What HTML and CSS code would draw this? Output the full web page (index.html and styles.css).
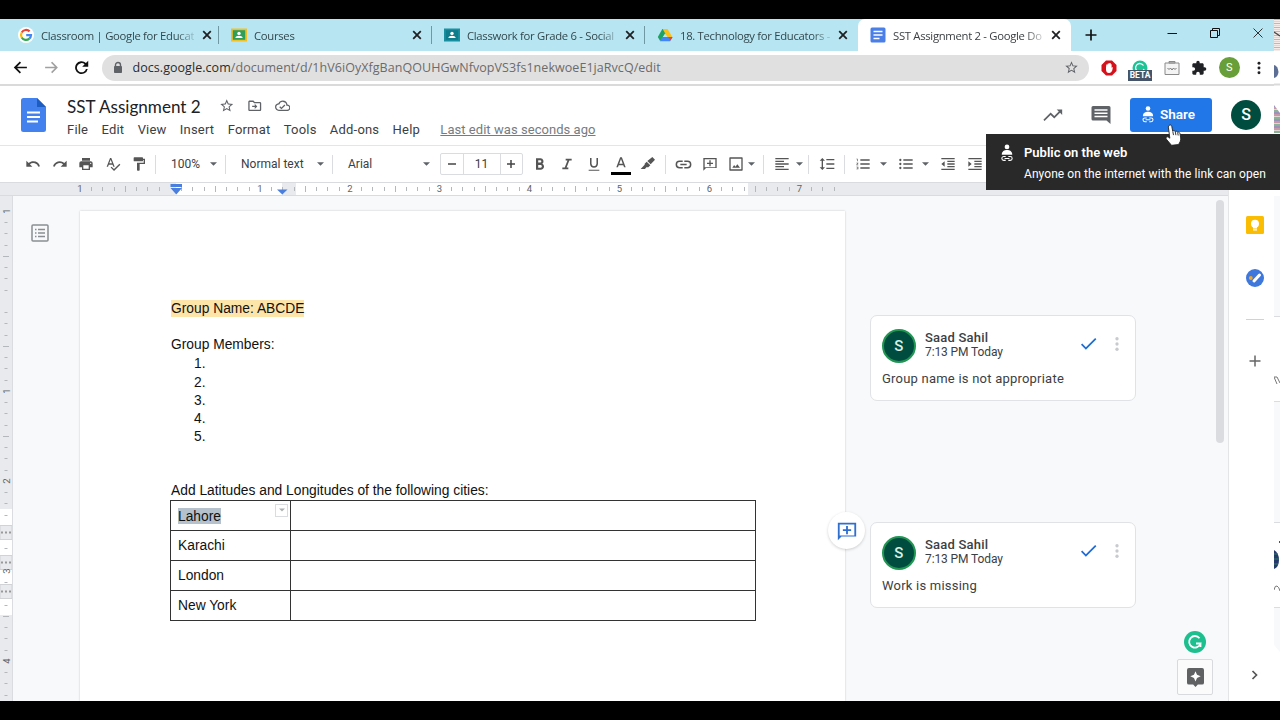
FILE: index.html
```html
<!DOCTYPE html>
<html lang="en">
<head>
  <meta charset="UTF-8">
  <meta name="viewport" content="width=device-width, initial-scale=1.0">
  <title>SST Assignment 2 - Google Docs</title>
  <link rel="stylesheet" href="styles.css">
</head>
<body>
  <!-- Shared icons -->
  <svg class="defs" width="0" height="0">
    <symbol id="i-close" viewBox="0 0 10 10"><path d="M1.2 1.2l7.6 7.6M8.8 1.2L1.2 8.8" stroke="#202124" stroke-width="1.8"/></symbol>
    <symbol id="i-caret" viewBox="0 0 8 4"><path d="M0 0h8L4 4z" fill="#5f6368"/></symbol>
    <symbol id="i-star" viewBox="0 0 24 24"><path d="M22 9.24l-7.19-.62L12 2 9.19 8.63 2 9.24l5.46 4.73L5.82 21 12 17.27 18.18 21l-1.63-7.03L22 9.24zM12 15.4l-3.76 2.27 1-4.28-3.32-2.88 4.38-.38L12 6.1l1.71 4.04 4.38.38-3.32 2.88 1 4.28L12 15.4z"/></symbol>
    <symbol id="i-dots" viewBox="0 0 24 24"><circle cx="12" cy="5" r="2.2"/><circle cx="12" cy="12" r="2.2"/><circle cx="12" cy="19" r="2.2"/></symbol>
    <symbol id="i-check" viewBox="0 0 24 24"><path d="M9 16.17L4.83 12l-1.42 1.41L9 19 21 7l-1.41-1.41z"/></symbol>
    <symbol id="i-addcomment" viewBox="0 0 24 24"><path d="M2 3h20v15H6l-4 4zm2 2v12h16V5zm7 1.5h2V10h3.500v2H13v3.500h-2V12H7.500v-2H11z" fill-rule="evenodd"/></symbol>
    <symbol id="i-public" viewBox="0 0 16 20"><circle cx="8" cy="3" r="2.7"/><path d="M2 12c0-4 3-5.300 6-5.300s6 1.300 6 5.300z"/><path d="M6.500 14H4.300a2.200 2.200 0 0 0 0 4.400h2.200M9.500 14h2.200a2.200 2.200 0 0 1 0 4.400H9.500M5.200 16.200h5.600" fill="none" stroke="currentColor" stroke-width="1.2"/></symbol>
  </svg>

  <div class="screen">
    <div class="window">

      <!-- Tab strip -->
      <div class="tabs">
        <div class="tab">
          <svg class="favicon" viewBox="0 0 16 16"><circle cx="8" cy="8" r="8" fill="#fff"/><g fill="none" stroke-width="2.2"><path d="M11.600 4.400A5 5 0 0 0 3.700 5.500" stroke="#ea4335"/><path d="M3.700 5.500a5 5 0 0 0 0 5" stroke="#fbbc05"/><path d="M3.700 10.500a5 5 0 0 0 7.600 1.200" stroke="#34a853"/><path d="M11.300 11.700A5 5 0 0 0 13 8.200H8.200" stroke="#4285f4"/></g></svg>
          <span class="tab-title">Classroom | Google for Educat</span>
          <svg class="tab-close"><use href="#i-close"/></svg>
        </div>
        <div class="tab">
          <svg class="favicon" viewBox="0 0 16 16"><path fill="#f2bf26" d="M0 1.500h16v13H0z"/><path fill="#2f9e5b" d="M1.800 3.200h12.400v9.600H1.800z"/><circle cx="8" cy="6.400" r="1.7" fill="#fff"/><path fill="#fff" d="M4.300 11c.3-3 7.100-3 7.400 0z"/></svg>
          <span class="tab-title">Courses</span>
          <svg class="tab-close"><use href="#i-close"/></svg>
        </div>
        <div class="tab">
          <svg class="favicon" viewBox="0 0 16 16"><path fill="#1a8f9f" d="M0 1.500h16v13H0z"/><path fill="#0f7c8c" d="M1.800 3.200h12.400v9.600H1.800z"/><circle cx="8" cy="6.400" r="1.7" fill="#fff"/><path fill="#fff" d="M4.300 11c.3-3 7.100-3 7.400 0z"/></svg>
          <span class="tab-title">Classwork for Grade 6 - Social</span>
          <svg class="tab-close"><use href="#i-close"/></svg>
        </div>
        <div class="tab">
          <svg class="favicon" viewBox="0 0 16 16"><path fill="#1ea362" d="M5.300 2h2.900L10 5 3.200 14 .8 10z"/><path fill="#fbc116" d="M5.600 2h4.900l5 8.200h-5z"/><path fill="#4285f4" d="M5.300 10h10.200l-2.400 4.200H2.900z"/><path fill="#e94335" d="M11.500 10h4l-2 3.500z"/><path fill="#b7e6f2" d="M8 6.400l2.200 3.600H5.800z"/></svg>
          <span class="tab-title">18. Technology for Educators -</span>
          <svg class="tab-close"><use href="#i-close"/></svg>
        </div>
        <div class="tab active">
          <svg class="favicon" viewBox="0 0 16 16"><rect x=".5" y=".5" width="15" height="15" rx="1.5" fill="#4a7fe8"/><path d="M3.500 4.500h9M3.500 8h9M3.500 11.500h6" stroke="#fff" stroke-width="1.6"/></svg>
          <span class="tab-title">SST Assignment 2 - Google Do</span>
          <svg class="tab-close"><use href="#i-close"/></svg>
        </div>
        <svg class="new-tab" viewBox="0 0 12 12"><path d="M6 .5v11M.5 6h11" stroke="#111" stroke-width="1.7"/></svg>
        <div class="window-buttons">
          <svg viewBox="0 0 12 12"><path d="M1.500 6.500h9.500" stroke="#111"/></svg>
          <svg viewBox="0 0 12 12"><path d="M1.500 3.500h7v7h-7zM3.500 3.500v-2h7v7h-2" fill="none" stroke="#111"/></svg>
          <svg viewBox="0 0 12 12"><path d="M1.500 1.500l9 9M10.500 1.500l-9 9" stroke="#333"/></svg>
        </div>
      </div>

      <!-- Address bar -->
      <div class="addressbar">
        <svg class="nav" viewBox="0 0 24 24" fill="#111"><path d="M21 10.800H7.200l5.600-5.600L11 3.500 2.500 12l8.500 8.500 1.700-1.700-5.500-5.600H21z"/></svg>
        <svg class="nav" viewBox="0 0 24 24" fill="#a0a0a0"><path d="M3 11h13.800l-5.600-5.600L13 4l8 8-8 8-1.600-1.500 5.400-5.500H3z"/></svg>
        <svg class="nav" viewBox="0 0 24 24" fill="#111"><path d="M18.300 5.700A9 9 0 1 0 20.800 14h-2.500a6.500 6.500 0 1 1-1.900-6.500L13 11h8.500V2.500z"/></svg>
        <div class="url">
          <svg class="lock" viewBox="0 0 10 13"><path d="M2.500 5.500V4a2.500 2.500 0 0 1 5 0v1.500" fill="none" stroke="#5f6368" stroke-width="1.4"/><rect x="1" y="5" width="8" height="7" rx=".8" fill="#5f6368"/></svg>
          <span class="address"><b>docs.google.com</b>/document/d/1hV6iOyXfgBanQOUHGwNfvopVS3fs1nekwoeE1jaRvcQ/edit</span>
          <svg class="bookmark" fill="#5f6368"><use href="#i-star"/></svg>
        </div>
        <div class="extensions">
          <svg viewBox="0 0 16 16"><path d="M5 .5h6L15.500 5v6L11 15.500H5L.5 11V5z" fill="#d5121c"/><path d="M5 7.500v2.200c0 2 1.300 3.300 3 3.300s2.800-1.200 3.300-2.800l.6-3.200-1.300.8V4.300H9.700V3H8.300v.6H6.700v1H5.300z" fill="#fff"/></svg>
          <div class="grammarly-ext">
            <svg viewBox="0 0 16 16"><circle cx="8" cy="8" r="7.5" fill="#1cc495"/><path d="M11.500 5.500A4.300 4.300 0 1 0 12 9" fill="none" stroke="#fff" stroke-width="1.3"/></svg>
            <span class="beta">BETA</span>
          </div>
          <svg viewBox="0 0 16 16"><path d="M1 3h14v11.500H1zM5 1.500h6V3H5z" fill="#f4f4f4" stroke="#8a8a8a"/><path d="M3.500 8l1.500 1.500L6.500 8 8 10l1.500-2L11 9.500 12.500 8" fill="none" stroke="#777"/></svg>
          <svg viewBox="0 0 24 24" fill="#202124"><path d="M20.500 11H19V7c0-1.100-.9-2-2-2h-4V3.500a2.500 2.500 0 0 0-5 0V5H4c-1.100 0-2 .9-2 2v3.800h1.500a2.700 2.700 0 0 1 0 5.400H2V20c0 1.100.9 2 2 2h3.800v-1.500a2.700 2.700 0 0 1 5.400 0V22H17c1.100 0 2-.9 2-2v-4h1.500a2.500 2.500 0 0 0 0-5z"/></svg>
          <span class="profile">S</span>
          <svg fill="#202124"><use href="#i-dots"/></svg>
        </div>
      </div>

      <!-- Docs header -->
      <header class="header">
        <svg class="docs-logo" viewBox="0 0 25 34"><path d="M2.500 0H16l9 9v22.500a2.500 2.500 0 0 1-2.500 2.500h-20A2.500 2.500 0 0 1 0 31.500v-29A2.500 2.500 0 0 1 2.500 0z" fill="#4382ee"/><path d="M16 0l9 9h-9z" fill="#1d5cc0"/><path d="M6 14.500h13M6 19h13M6 23.500h11" stroke="#fff" stroke-width="1.8"/></svg>
        <div class="doc-info">
          <div class="title-row">
            <span class="doc-title">SST Assignment 2</span>
            <svg viewBox="0 0 24 24"><use href="#i-star"/></svg>
            <svg viewBox="0 0 24 24"><path d="M20 6h-8l-2-2H4c-1.100 0-2 .9-2 2v12c0 1.100.9 2 2 2h16c1.100 0 2-.9 2-2V8c0-1.100-.9-2-2-2zm0 12H4V6h5.200l2 2H20zm-8-1l4-4-4-4v3H8v2h4z"/></svg>
            <svg viewBox="0 0 24 24"><path d="M19.350 10.040A7.490 7.490 0 0 0 12 4C9.110 4 6.600 5.640 5.350 8.040A5.994 5.994 0 0 0 0 14c0 3.310 2.690 6 6 6h13c2.760 0 5-2.240 5-5 0-2.640-2.050-4.780-4.650-4.960zM19 18H6c-2.210 0-4-1.790-4-4s1.790-4 4-4h.7A5.500 5.500 0 0 1 17.500 11.500v.5H19a3 3 0 0 1 0 6zm-9-3.200l-2-2L6.600 14.200l3.400 3.400 6-6-1.400-1.400z"/></svg>
          </div>
          <nav class="menus">
            <span>File</span><span>Edit</span><span>View</span><span>Insert</span><span>Format</span><span>Tools</span><span>Add-ons</span><span>Help</span>
            <a class="last-edit">Last edit was seconds ago</a>
          </nav>
        </div>
        <div class="header-actions">
          <svg class="trend" viewBox="0 0 24 24" fill="#5f6368"><path d="M16 6l2.290 2.290-4.880 4.880-4-4L1.500 17.200l1.300 1.300 6.600-6.600 4 4 6.300-6.300L22 12V6z"/></svg>
          <svg class="comments-icon" viewBox="0 0 20 20"><path d="M2 1h16a1.500 1.500 0 0 1 1.500 1.500V19l-4-3.500H2A1.500 1.500 0 0 1 .5 14V2.500A1.500 1.500 0 0 1 2 1z" fill="#5f6368"/><path d="M3.500 5h13M3.500 8.200h13M3.500 11.500h13" stroke="#fff" stroke-width="1.5"/></svg>
          <button class="share"><svg fill="currentColor"><use href="#i-public"/></svg>Share</button>
          <span class="account">S</span>
        </div>
      </header>

      <!-- Toolbar -->
      <div class="toolbar">
        <div class="group g-history">
          <i><svg viewBox="0 0 24 24"><path d="M12.500 8c-2.650 0-5.050.99-6.900 2.600L2 7v9h9l-3.620-3.620A8 8 0 0 1 20.080 16l2.370-.78A10.500 10.500 0 0 0 12.500 8z"/></svg></i>
          <i><svg viewBox="0 0 24 24"><path d="M18.400 10.600A10.500 10.500 0 0 0 1.540 15.220L3.900 16a8 8 0 0 1 12.720-3.620L13 16h9V7z"/></svg></i>
          <i><svg viewBox="0 0 24 24"><path d="M19 8H5c-1.660 0-3 1.340-3 3v6h4v4h12v-4h4v-6c0-1.660-1.340-3-3-3zm-3 11H8v-5h8zm3-7a1 1 0 1 1 0-2 1 1 0 0 1 0 2zM18 3H6v4h12z"/></svg></i>
          <i><svg viewBox="0 0 24 24"><path d="M12.450 16h2.090L9.430 3H7.570L2.460 16h2.090l1.120-3h5.640zm-6.020-5L8.500 5.480 10.570 11zm15.160.59l-8.090 8.090L9.830 16l-1.410 1.410 5.090 5.090L23 13z"/></svg></i>
          <i><svg viewBox="0 0 24 24"><path d="M18 4V3c0-.55-.45-1-1-1H5c-.55 0-1 .45-1 1v4c0 .55.450 1 1 1h12c.55 0 1-.45 1-1V6h1v4H9v11c0 .55.450 1 1 1h2c.55 0 1-.45 1-1v-9h8V4z"/></svg></i>
        </div>
        <div class="group drop g-zoom"><span>100%</span><svg class="caret"><use href="#i-caret"/></svg></div>
        <div class="group drop g-style"><span>Normal text</span><svg class="caret"><use href="#i-caret"/></svg></div>
        <div class="group drop g-font"><span>Arial</span><svg class="caret"><use href="#i-caret"/></svg></div>
        <div class="size-box">
          <span><svg viewBox="0 0 10 10"><path d="M1 5h8" stroke="#444" stroke-width="1.5"/></svg></span>
          <span class="size">11</span>
          <span><svg viewBox="0 0 10 10"><path d="M1 5h8M5 1v8" stroke="#444" stroke-width="1.5"/></svg></span>
        </div>
        <div class="group g-format">
          <i><svg viewBox="0 0 24 24"><path d="M15.600 11.500A4.500 4.500 0 0 0 12.500 3.500H6v17h7.200c4.800 0 6.800-6.500 2.400-9zM9.300 6.200h3c2.300 0 2.300 3.600 0 3.600h-3zm3.500 11.500H9.300v-4.200h3.500c2.600 0 2.600 4.200 0 4.200z"/></svg></i>
          <i><svg viewBox="0 0 24 24"><path d="M10 4v2.700h2.700L8.600 17.300H5V20h9v-2.700h-2.600l4.100-10.600H19V4z"/></svg></i>
          <i><svg viewBox="0 0 24 24"><path d="M12 17.500c3.500 0 6-2.500 6-6V3h-2.300v8.500a3.700 3.700 0 0 1-7.400 0V3H6v8.500c0 3.500 2.500 6 6 6zM4 20.500h16v1.700H4z"/></svg></i>
          <i class="text-colour"><svg viewBox="0 0 24 24"><path d="M10.700 2L5 17h2.400l1.200-3.200h6.800l1.200 3.200H19L13.300 2zM9.400 11.700L12 4.500l2.600 7.200z"/></svg></i>
          <i><svg viewBox="0 0 24 24"><path d="M18.500 1.500l4 4-6.500 7-5-5zM10 8.500l5.500 5.500-3 3H9.500l-2 2.500H1l6-6.500v-1.500z"/></svg></i>
        </div>
        <div class="group g-insert">
          <i><svg class="link-icon" viewBox="0 0 24 24"><path d="M3.900 12A3.100 3.100 0 0 1 7 8.900h4V7H7a5 5 0 0 0 0 10h4v-1.900H7A3.100 3.100 0 0 1 3.900 12zM8 13h8v-2H8zm9-6h-4v1.900h4a3.100 3.100 0 0 1 0 6.200h-4V17h4a5 5 0 0 0 0-10z"/></svg></i>
          <i><svg><use href="#i-addcomment"/></svg></i>
          <i><svg viewBox="0 0 24 24"><path d="M3 2h18a1 1 0 0 1 1 1v18a1 1 0 0 1-1 1H3a1 1 0 0 1-1-1V3a1 1 0 0 1 1-1zm1 2v16h16V4zm2.500 13.500l2.700-4 2 2.500 2.800-3.500 4 5z" fill-rule="evenodd"/></svg></i>
          <svg class="caret"><use href="#i-caret"/></svg>
        </div>
        <div class="group g-align">
          <i><svg viewBox="0 0 24 24"><path d="M2 3h20v2H2zm0 4h13v2H2zm0 4h20v2H2zm0 4h13v2H2zm0 4h20v2H2z"/></svg></i>
          <svg class="caret"><use href="#i-caret"/></svg>
        </div>
        <div class="group g-spacing">
          <i><svg viewBox="0 0 24 24"><path d="M6 7h3L5 3 1 7h3v10H1l4 4 4-4H6zm5-2.500v2h12v-2zm0 15h12v-2H11zm0-6.500h12v-2H11z"/></svg></i>
        </div>
        <div class="group g-lists">
          <i><svg viewBox="0 0 24 24"><path d="M2 17h2v.5H3v1h1v.5H2v1h3v-4H2zm1-9h1V4H2v1h1zm-1 3h1.800L2 13.100v.9h3v-1H3.200L5 10.900V10H2zm6-6v2h14V5zm0 14h14v-2H8zm0-6h14v-2H8z"/></svg></i>
          <svg class="caret"><use href="#i-caret"/></svg>
          <i><svg viewBox="0 0 24 24"><circle cx="3.500" cy="6" r="1.7"/><circle cx="3.500" cy="12" r="1.7"/><circle cx="3.500" cy="18" r="1.7"/><path d="M8 5h14v2H8zm0 6h14v2H8zm0 6h14v2H8z"/></svg></i>
          <svg class="caret"><use href="#i-caret"/></svg>
          <i><svg viewBox="0 0 24 24"><path d="M2 3h20v2H2zm9 4h11v2H11zm0 4h11v2H11zm0 4h11v2H11zm-9 4h20v2H2zm0-7l5-4v8z"/></svg></i>
          <i><svg viewBox="0 0 24 24"><path d="M2 3h20v2H2zm9 4h11v2H11zm0 4h11v2H11zm0 4h11v2H11zm-9 4h20v2H2zm0-3l5-4-5-4z"/></svg></i>
        </div>
      </div>

      <div class="workspace">
        <div class="editor">
          <!-- Horizontal ruler -->
          <svg class="ruler" width="1228" height="14">
            <defs>
              <pattern id="h-ticks" x="80" width="90" height="14" patternUnits="userSpaceOnUse">
                <path d="M11.500 5v4M22.500 5v4M34.500 5v4M45.500 4v6M56.500 5v4M67.500 5v4M79.500 5v4" stroke="#b4b7bb"/>
              </pattern>
            </defs>
            <rect width="1228" height="14" fill="#e8eaed"/>
            <rect x="176" width="106" height="14" fill="#fff"/>
            <rect x="296" width="452" height="14" fill="#fff"/>
            <rect x="80" width="765" height="14" fill="url(#h-ticks)"/>
            <g class="ruler-text">
              <text x="80" y="10">1</text><text x="260" y="10">1</text><text x="350" y="10">2</text><text x="439.500" y="10">3</text><text x="529.500" y="10">4</text><text x="619.500" y="10">5</text><text x="709.500" y="10">6</text><text x="799.500" y="10">7</text>
            </g>
            <path d="M170.500 2h11.500v3h-11.500zM170.500 6h11.500l-5.700 6.500z" fill="#4a7fe0"/>
            <path d="M277 7.500h10.500l-5.200 5z" fill="#4a7fe0"/>
            <path d="M0 .5h1228M0 13.500h1228" stroke="#d9dbdf"/>
          </svg>

          <div class="canvas">
            <!-- Vertical ruler -->
            <svg class="v-ruler" width="13" height="505">
              <defs>
                <pattern id="v-ticks" y="15" width="13" height="90" patternUnits="userSpaceOnUse">
                  <path d="M4.500 11.500h3M4.500 22.500h3M4.500 34.500h3M3 45.500h6M4.500 56.500h3M4.500 67.500h3M4.500 79.500h3" stroke="#b4b7bb"/>
                </pattern>
              </defs>
              <rect width="13" height="505" fill="#e8eaed"/>
              <path d="M0 313h12v106H0z" fill="#fff"/>
              <rect width="13" y="15" height="490" fill="url(#v-ticks)"/>
              <path d="M0 329.500h12v14H0zM0 359.500h12v14H0zM0 388.500h12v14H0z" fill="#e8eaed" stroke="#d0d2d5"/>
              <path d="M1 336.500h10M1 366.500h10M1 395.500h10" stroke="#999" stroke-width="2" stroke-dasharray="2 2"/>
              <g class="ruler-text">
                <text transform="translate(10 15) rotate(-90)">1</text><text transform="translate(10 195) rotate(-90)">1</text><text transform="translate(10 285) rotate(-90)">2</text><text transform="translate(10 375) rotate(-90)">3</text><text transform="translate(10 465) rotate(-90)">4</text>
              </g>
              <path d="M12.500 0v505" stroke="#dadce0"/>
            </svg>
            <div class="outline">
              <svg viewBox="0 0 18 18"><rect x="1" y="1" width="16" height="16" rx="1" fill="none" stroke="#8a8e93" stroke-width="1.5"/><path d="M4 5.500h1.500M4 9h1.500M4 12.500h1.500M7 5.500h7M7 9h7M7 12.500h7" stroke="#8a8e93" stroke-width="1.3"/></svg>
            </div>

            <main class="page">
              <p><mark>Group Name: ABCDE</mark></p>
              <p>&nbsp;</p>
              <p>Group Members:</p>
              <ol class="members">
                <li>1.</li>
                <li>2.</li>
                <li>3.</li>
                <li>4.</li>
                <li>5.</li>
              </ol>
              <p>&nbsp;</p>
              <p>&nbsp;</p>
              <p>Add Latitudes and Longitudes of the following cities:</p>
              <table class="cities">
                <tr><td><div class="selected-cell"><span class="selected">Lahore</span><span class="cell-menu"><svg><use href="#i-caret"/></svg></span></div></td><td></td></tr>
                <tr><td>Karachi</td><td></td></tr>
                <tr><td>London</td><td></td></tr>
                <tr><td>New York</td><td></td></tr>
              </table>
              <span class="add-comment"><svg fill="#2f6fd0"><use href="#i-addcomment"/></svg></span>
            </main>

            <aside class="comments">
              <div class="card">
                <div class="card-head">
                  <span class="avatar">S</span>
                  <div class="author"><b>Saad Sahil</b><span>7:13 PM Today</span></div>
                  <svg class="resolve" fill="#1f6cd6"><use href="#i-check"/></svg>
                  <svg class="more" fill="#c8cacd"><use href="#i-dots"/></svg>
                </div>
                <p>Group name is not appropriate</p>
              </div>
              <div class="card">
                <div class="card-head">
                  <span class="avatar">S</span>
                  <div class="author"><b>Saad Sahil</b><span>7:13 PM Today</span></div>
                  <svg class="resolve" fill="#1f6cd6"><use href="#i-check"/></svg>
                  <svg class="more" fill="#c8cacd"><use href="#i-dots"/></svg>
                </div>
                <p>Work is missing</p>
              </div>
            </aside>

            <div class="corner">
              <svg class="grammarly" viewBox="0 0 22 22"><circle cx="11" cy="11" r="11" fill="#1dbf8f"/><path d="M15.500 7.200A5.800 5.800 0 1 0 16.500 12.500H12M16.500 12v4" fill="none" stroke="#fff" stroke-width="1.8"/></svg>
              <div class="explore"><svg viewBox="0 0 18 20"><path d="M2 0h14a2 2 0 0 1 2 2v13.500a2 2 0 0 1-2 2h-4.500L9 20l-2.500-2.500H2a2 2 0 0 1-2-2V2a2 2 0 0 1 2-2z" fill="#5f6163"/><path d="M9 3.300l1.600 3.900 3.900 1.600-3.900 1.600L9 14.300l-1.600-3.900-3.900-1.600 3.900-1.600z" fill="#fff"/></svg></div>
            </div>
            <div class="scrollbar"></div>
          </div>
        </div>

        <!-- Side panel -->
        <div class="side-panel">
          <svg width="18" height="18" viewBox="0 0 18 18"><rect width="18" height="18" rx="1.5" fill="#fbbc04"/><circle cx="9" cy="7.700" r="4" fill="#fff"/><path d="M7 10h4v2.500H7zM7 13.300h4v1.200H7z" fill="#fff"/></svg>
          <svg width="18" height="18" viewBox="0 0 18 18"><circle cx="9" cy="9" r="9" fill="#3f78dd"/><circle cx="4.800" cy="9" r="1.9" fill="#f0a928"/><path d="M8 12l5.500-6" stroke="#fff" stroke-width="3" stroke-linecap="round"/></svg>
          <hr>
          <svg width="12" height="12" viewBox="0 0 12 12"><path d="M6 .5v11M.5 6h11" stroke="#666" stroke-width="1.5"/></svg>
          <svg class="collapse" width="8" height="10" viewBox="0 0 8 10"><path d="M1.500 1l4 4-4 4" fill="none" stroke="#555" stroke-width="1.7"/></svg>
        </div>
      </div>
    </div>

    <!-- Sliver of the window behind -->
    <svg class="behind" width="6" height="682">
      <defs>
        <pattern id="stripes" width="6" height="4" patternUnits="userSpaceOnUse"><path d="M0 .5h6" stroke="#d9a9b4"/><path d="M0 2.500h6" stroke="#cfe0c8"/></pattern>
        <pattern id="bars" width="6" height="7" patternUnits="userSpaceOnUse"><rect width="6" height="7" fill="#dcd6d2"/><path d="M0 1h6" stroke="#3c8f5d"/><path d="M0 3h6" stroke="#5b4fa0"/><path d="M0 5h6" stroke="#b35a7c"/></pattern>
      </defs>
      <rect width="6" height="682" fill="#fff"/>
      <rect width="6" height="32" fill="#f5ebe8"/><rect width="6" height="32" fill="url(#stripes)"/>
      <path d="M0 13l6 4" stroke="#444" stroke-width="1.2"/>
      <path d="M0 46q4 1 4.500 7Q4 58 0 59z" fill="#5c6e94"/>
      <path d="M0 65.500h6" stroke="#dadada" stroke-width="2"/>
      <path d="M0 86l6 8v20H0z" fill="url(#bars)"/>
      <path d="M0 177h6v120H0zM0 382h6v121H0zM0 588h6v45L0 626z" fill="#f8f9fa"/>
      <path d="M0 297.500h6M0 382.500h6M0 503.500h6M0 588.500h6" stroke="#dadce0"/>
      <path d="M0 358l3 0 3 6M0 358l3 7" fill="none" stroke="#777"/>
      <path d="M0 531q5 3 5 10T0 550z" fill="#25386b"/><path d="M0 535h4M0 540h5M0 545h4" stroke="#2f7d62"/>
      <path d="M0 571q1-5 3-4t3 5" fill="none" stroke="#777"/><path d="M5 522h1v2H5z" fill="#744"/>
    </svg>
  </div>

  <!-- Share tooltip -->
  <div class="tooltip">
    <svg fill="currentColor"><use href="#i-public"/></svg>
    <div><b>Public on the web</b><span>Anyone on the internet with the link can open</span></div>
  </div>
  <svg class="cursor" viewBox="0 0 18 22"><path d="M4.200 1.300c1-.8 2.400-.2 2.600 1.100l.9 4.700c.8-.7 2-.5 2.500.4.9-.6 2-.2 2.400.7 1-.4 2.200.3 2.400 1.400l.7 4.400c.3 2.400-.8 4.800-2.400 6.600l-6.800.7L1.200 15c-.9-1.400.6-2.900 2-2l1.600 1.200L3.400 3.200c-.1-.8.200-1.500.8-1.900z" fill="#fff" stroke="#222" stroke-width=".9"/><path d="M7.800 7.500l.7 3.600M10.300 7.800l.6 3.400M12.700 8.500l.5 3" stroke="#222" stroke-width=".9"/></svg>
</body>
</html>
```
FILE: styles.css
```css
body {
  margin: 0;
  width: 1280px;
  height: 720px;
  overflow: hidden;
  background: #000;
  font-family: Roboto, "Liberation Sans", sans-serif;
  color: #3c4043;
}

svg {
  display: block;
  flex: none;
}

.defs {
  position: absolute;
}

.screen {
  display: flex;
  height: 682px;
  padding: 19px 0;
}

.window {
  display: flex;
  flex-direction: column;
  width: 1274px;
  background: #fff;
}

/* Tab strip */
.tabs {
  display: flex;
  align-items: center;
  height: 32px;
  padding-left: 6px;
  background: #b7e6f2;
}

.tab {
  display: flex;
  align-items: center;
  box-sizing: border-box;
  width: 213px;
  height: 32px;
  padding: 0 10px 0 12px;
  font-family: "Open Sans", sans-serif;
  font-size: 11.3px;
  letter-spacing: -0.3px;
  color: #33474d;
}

.tab:not(.active):not(:nth-child(4)) {
  background: linear-gradient(#6f98a3, #6f98a3) right center / 1px 18px no-repeat;
}

.tab.active {
  background: #fff;
  border-radius: 7px 7px 0 0;
  color: #3c4043;
}

.favicon {
  width: 16px;
  height: 16px;
}

.tab-title {
  flex: 1;
  margin: 0 8px 0 7px;
  white-space: nowrap;
  mask-image: linear-gradient(to right, #000 88%, rgba(0, 0, 0, 0.2));
}

.tab-close {
  width: 10px;
  height: 10px;
}

.new-tab {
  width: 12px;
  height: 12px;
  margin-left: 14px;
}

.window-buttons {
  display: flex;
  gap: 31px;
  margin: 0 10px 5px auto;
}

.window-buttons svg {
  width: 12px;
  height: 12px;
}

/* Address bar */
.addressbar {
  display: flex;
  align-items: center;
  height: 33px;
  padding-left: 12px;
  border-bottom: 2px solid #dadada;
}

.nav {
  width: 17px;
  height: 17px;
  margin-right: 13.5px;
}

.url {
  display: flex;
  align-items: center;
  box-sizing: border-box;
  width: 987px;
  height: 26px;
  margin-left: -2px;
  padding: 0 10px 0 11px;
  border-radius: 13px;
  background: #e0e0e0;
  font-family: "Open Sans", sans-serif;
  font-size: 12.5px;
  letter-spacing: 0.05px;
  color: #6b6b6b;
}

.url b {
  font-weight: 400;
  color: #2b2b2b;
}

.lock {
  width: 10px;
  height: 13px;
  margin-right: 10px;
}

.bookmark {
  width: 15px;
  height: 15px;
  margin-left: auto;
}

.extensions {
  display: flex;
  align-items: center;
  justify-content: space-between;
  width: 167px;
  margin-left: 12px;
}

.extensions svg {
  width: 16px;
  height: 16px;
}

.grammarly-ext {
  position: relative;
  padding: 0 4px;
}

.beta {
  position: absolute;
  left: 0;
  top: 10px;
  width: 24px;
  height: 11px;
  background: #46546a;
  font-size: 8.5px;
  font-weight: 700;
  line-height: 11px;
  text-align: center;
  color: #fff;
}

.profile {
  width: 21px;
  height: 21px;
  border-radius: 50%;
  background: #689f38;
  font-size: 11px;
  line-height: 21px;
  text-align: center;
  color: #fff;
}

/* Header */
.header {
  display: flex;
  align-items: center;
  height: 57px;
  padding: 0 0 2px 21px;
  border-bottom: 1px solid #e4e5e7;
}

.docs-logo {
  width: 25px;
  height: 34px;
}

.doc-info {
  margin-left: 21px;
  padding-top: 8px;
}

.title-row {
  display: flex;
  align-items: center;
  gap: 12.5px;
  height: 22px;
}

.title-row svg {
  width: 15.5px;
  height: 15.5px;
  fill: #5f6368;
}

.doc-title {
  width: 139px;
  font-family: Lato, Roboto, sans-serif;
  font-size: 17.1px;
  white-space: nowrap;
  color: #202124;
}

.menus {
  display: flex;
  align-items: center;
  gap: 13.3px;
  height: 25px;
  font-size: 13px;
  letter-spacing: 0.2px;
}

.last-edit {
  margin-left: 7px;
  letter-spacing: 0.05px;
  color: #777b80;
  text-decoration: underline;
}

.header-actions {
  display: flex;
  align-items: center;
  margin: 0 13px 0 auto;
}

.trend {
  width: 22px;
  height: 22px;
}

.comments-icon {
  width: 20px;
  height: 20px;
  margin: 0 19px 0 27px;
}

.share {
  display: flex;
  align-items: center;
  gap: 5px;
  width: 82px;
  height: 34px;
  padding: 0 0 1px 11px;
  border: 0;
  border-radius: 3px;
  background: #2277e8;
  font-family: Roboto, sans-serif;
  font-size: 13.5px;
  font-weight: 600;
  color: #fff;
}

.share svg {
  width: 14px;
  height: 17px;
}

.account {
  width: 30px;
  height: 30px;
  margin-left: 19px;
  border-radius: 50%;
  background: #004d40;
  font-size: 16px;
  font-weight: 500;
  line-height: 30px;
  text-align: center;
  color: #fff;
}

/* Toolbar */
.toolbar {
  display: flex;
  align-items: center;
  height: 36px;
  font-size: 12px;
}

.group {
  display: flex;
  align-items: center;
  box-sizing: border-box;
  height: 19px;
  border-right: 1px solid #dadce0;
}

.group i {
  display: flex;
  flex: none;
  justify-content: center;
  width: 26.5px;
}

.group i svg {
  width: 16px;
  height: 16px;
  fill: #555;
}

.caret {
  width: 7px;
  height: 4px;
}

.drop {
  justify-content: space-between;
  padding: 0 8px 0 15px;
}

.g-history {
  width: 156px;
  padding-left: 20px;
}

.g-zoom {
  width: 70px;
}

.g-style {
  width: 107px;
}

.g-font {
  width: 105px;
  padding-right: 8px;
  border: 0;
}

.size-box {
  display: flex;
  align-items: center;
  box-sizing: border-box;
  width: 83px;
  height: 22px;
  margin: 0 4px 0 2px;
  border: 1px solid #dadce0;
  border-radius: 2px;
}

.size-box span {
  display: flex;
  flex: 1;
  justify-content: center;
}

.size-box .size {
  flex: 0 0 36px;
  border: solid #dadce0;
  border-width: 0 1px;
  line-height: 20px;
}

.size-box svg {
  width: 10px;
  height: 10px;
}

.g-format {
  width: 139px;
}

.g-format i {
  width: 26.8px;
}

.group .text-colour {
  position: relative;
}

.text-colour::after {
  content: "";
  position: absolute;
  top: 16px;
  width: 20px;
  height: 3px;
  background: #000;
}

.g-insert {
  width: 98px;
  padding-left: 4px;
}

.group i .link-icon {
  width: 19px;
  height: 19px;
}

.g-insert .caret {
  margin-left: -2px;
}

.g-align {
  width: 45px;
  padding-left: 5px;
}

.g-spacing {
  width: 36px;
  padding-left: 5px;
}

.g-lists {
  padding-left: 5px;
  border: 0;
}

.g-lists .caret {
  margin: 0 6px 0 3px;
}

/* Workspace */
.workspace {
  display: flex;
  flex: 1;
  min-height: 0;
}

.editor {
  width: 1228px;
}

.ruler-text {
  font-size: 9.5px;
  fill: #5f6368;
  text-anchor: middle;
}

.canvas {
  position: relative;
  display: flex;
  height: 505px;
  background: #f8f9fa;
}

.outline {
  width: 67px;
}

.outline svg {
  width: 18px;
  height: 18px;
  margin: 28px 0 0 18px;
}

.page {
  position: relative;
  box-sizing: border-box;
  width: 765px;
  margin-top: 15px;
  padding: 89px 89px 0 91px;
  background: #fff;
  box-shadow: 0 0 2px rgba(0, 0, 0, 0.2);
  font-family: "Liberation Sans", Arial, sans-serif;
  font-size: 13.8px;
  line-height: 18.15px;
  color: #111;
}

.page p,
.card p {
  margin: 0;
}

.page mark {
  padding: 1px 0;
  background: #fde5a9;
  color: #111;
}

.members {
  margin: 1px 0 -1px;
  padding: 0 0 0 23px;
  list-style: none;
}

.cities {
  width: 586px;
  margin-left: -1px;
  border-collapse: collapse;
  table-layout: fixed;
}

.cities td {
  height: 27px;
  padding: 2px 0 0 7px;
  border: 1px solid #333;
}

.cities td:first-child {
  width: 112px;
}

.selected-cell {
  display: flex;
  justify-content: space-between;
  margin-top: -1px;
}

.selected {
  height: 16px;
  line-height: 17px;
  background: #b5c1cc;
}

.cell-menu {
  display: flex;
  align-items: center;
  justify-content: center;
  width: 11px;
  height: 11px;
  margin: -4px 2px 0 0;
  border: 1px solid #dadce0;
}

.cell-menu svg {
  width: 6px;
  height: 4px;
  opacity: 0.5;
}

.add-comment {
  position: absolute;
  left: 748px;
  top: 301px;
  display: flex;
  align-items: center;
  justify-content: center;
  width: 37px;
  height: 37px;
  border-radius: 50%;
  background: #fff;
  box-shadow: 0 1px 3px rgba(0, 0, 0, 0.18);
}

.add-comment svg {
  width: 22px;
  height: 22px;
}

/* Comments */
.comments {
  display: flex;
  flex-direction: column;
  gap: 121px;
  margin: 119px 0 0 25px;
}

.card {
  box-sizing: border-box;
  width: 266px;
  height: 86px;
  padding: 13px 0 0 11px;
  border: 1px solid #e0e2e5;
  border-radius: 7px;
  background: #fff;
  font-size: 13px;
  letter-spacing: 0.22px;
}

.card-head {
  display: flex;
}

.avatar {
  box-sizing: border-box;
  width: 34px;
  height: 34px;
  border: 2px solid #219653;
  border-radius: 50%;
  background: #004d40;
  font-size: 15px;
  font-weight: 500;
  line-height: 30px;
  text-align: center;
  color: #d8f0e4;
}

.author {
  display: flex;
  flex-direction: column;
  width: 153px;
  margin: 1px 0 0 9px;
  line-height: 15px;
}

.author b {
  font-weight: 500;
  letter-spacing: 0.2px;
}

.author span {
  font-size: 12px;
  letter-spacing: -0.1px;
}

.resolve {
  width: 21px;
  height: 21px;
  margin-top: 4px;
}

.more {
  width: 18px;
  height: 18px;
  margin: 6px 0 0 9px;
}

.card p {
  margin-top: 8px;
  line-height: 16px;
}

.corner {
  position: absolute;
  right: 15px;
  bottom: 6px;
  display: flex;
  flex-direction: column;
  align-items: center;
  gap: 6px;
}

.grammarly {
  width: 22px;
  height: 22px;
}

.explore {
  display: flex;
  align-items: center;
  justify-content: center;
  width: 34px;
  height: 34px;
  border: 1px solid #d8dadd;
  border-radius: 2px;
  background: #fbfbfb;
}

.explore svg {
  width: 17px;
  height: 19px;
}

.scrollbar {
  position: absolute;
  right: 4px;
  top: 4px;
  width: 8px;
  height: 243px;
  border-radius: 4px;
  background: #dadce0;
}

/* Side panel */
.side-panel {
  display: flex;
  flex-direction: column;
  align-items: center;
  box-sizing: border-box;
  width: 46px;
  padding: 34px 0 21px 6px;
  border-left: 1px solid #e4e5e7;
  gap: 35px;
}

.side-panel hr {
  width: 18px;
  height: 1px;
  margin: -3px 0 0;
  border: 0;
  background: #d0d2d5;
}

.side-panel .collapse {
  margin-top: auto;
}

/* Tooltip */
.tooltip {
  position: absolute;
  left: 986px;
  top: 134px;
  display: flex;
  box-sizing: border-box;
  width: 294px;
  height: 56px;
  padding: 10px 0 0 14px;
  background: #292929;
  color: #fff;
}

.tooltip svg {
  width: 14px;
  height: 18px;
}

.tooltip div {
  display: flex;
  flex-direction: column;
  margin-left: 10px;
  line-height: 18px;
  white-space: nowrap;
}

.tooltip b {
  font-size: 13px;
  font-weight: 600;
}

.tooltip span {
  margin-top: 3px;
  font-size: 12px;
  letter-spacing: 0.07px;
}

.cursor {
  position: absolute;
  left: 1165px;
  top: 124px;
  width: 18px;
  height: 22px;
}
```
